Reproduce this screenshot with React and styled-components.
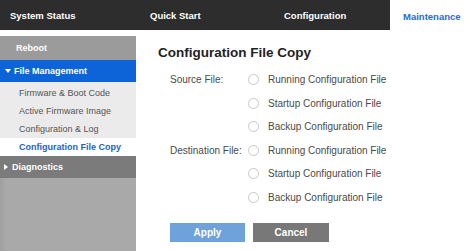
import React from 'react';
import styled, { createGlobalStyle } from 'styled-components';

const Global = createGlobalStyle`
  html, body { margin: 0; padding: 0; background: #fff; }
  body {
    font-family: "Liberation Sans", Arial, sans-serif;
    width: 474px; height: 251px; overflow: hidden;
  }
`;

const Page = styled.div`
  display: flex;
  flex-direction: column;
  width: 474px;
  height: 251px;
`;

const TopBar = styled.div`
  display: flex;
  height: 30px;
  flex-shrink: 0;
  background: #2d2d2d;
`;

const Tab = styled.div`
  box-sizing: border-box;
  width: ${p => (p.$w ? `${p.$w}px` : 'auto')};
  flex: ${p => (p.$w ? '0 0 auto' : '1')};
  padding-left: ${p => p.$pl}px;
  padding-top: ${p => (p.$active ? 2 : 0)}px;
  display: flex;
  align-items: center;
  background: ${p => (p.$active ? '#fff' : 'transparent')};
  color: ${p => (p.$active ? '#2a6ad2' : '#fff')};
  font-size: 9.5px;
  font-weight: bold;
  white-space: nowrap;
`;

const Body = styled.div`
  display: flex;
  flex: 1;
  min-height: 0;
`;

const Sidebar = styled.div`
  width: 136px;
  margin-top: 6px;
  display: flex;
  flex-direction: column;
  flex-shrink: 0;
`;

const SideHead = styled.div`
  box-sizing: border-box;
  height: ${p => p.$h}px;
  padding-left: ${p => p.$pl}px;
  display: flex;
  align-items: center;
  background: ${p => p.$bg};
  color: #fff;
  font-size: 9px;
  font-weight: bold;
  white-space: nowrap;
`;

const Caret = styled.span`
  width: 0;
  height: 0;
  margin-right: ${p => (p.$open ? 3 : 4)}px;
  ${p =>
    p.$open
      ? `border-left: 3px solid transparent; border-right: 3px solid transparent; border-top: 4px solid #fff;`
      : `border-top: 3px solid transparent; border-bottom: 3px solid transparent; border-left: 4px solid #fff;`}
`;

const SubList = styled.div`
  background: #ebebeb;
  padding-top: 2px;
  display: flex;
  flex-direction: column;
`;

const SubItem = styled.div`
  height: 18px;
  padding-left: 19px;
  display: flex;
  align-items: center;
  font-size: 9px;
  white-space: nowrap;
  background: ${p => (p.$active ? '#fff' : 'transparent')};
  color: ${p => (p.$active ? '#1f5fc6' : '#555')};
  font-weight: ${p => (p.$active ? 'bold' : 'normal')};
`;

const Filler = styled.div`
  flex: 1;
  background: linear-gradient(to right, #9f9f9f 0px, #a9a9a9 6px, #a9a9a9 100%);
`;

const Content = styled.div`
  flex: 1;
  padding: 14px 0 0 22px;
  color: #4a4a4a;
`;

const Title = styled.h1`
  margin: 0;
  font-size: 13.5px;
  line-height: 17px;
  font-weight: bold;
  color: #222;
  white-space: nowrap;
`;

const Form = styled.div`
  margin-top: 7px;
  padding-left: 12px;
  display: grid;
  grid-template-columns: 78px auto;
  grid-auto-rows: 23.5px;
  font-size: 10px;
`;

const Label = styled.div`
  display: flex;
  align-items: center;
  white-space: nowrap;
`;

const Option = styled.label`
  grid-column: 2;
  display: flex;
  align-items: center;
  white-space: nowrap;
`;

const Radio = styled.span`
  box-sizing: border-box;
  width: 11px;
  height: 11px;
  border-radius: 50%;
  border: 1px solid #c8c8c8;
  background: #fff;
  margin-right: 9px;
  flex-shrink: 0;
`;

const Buttons = styled.div`
  margin-top: 14px;
  padding-left: 12px;
  display: flex;
  gap: 8px;
`;

const Button = styled.button`
  width: ${p => p.$w}px;
  height: 19px;
  border: none;
  padding: 0;
  background: ${p => p.$bg};
  color: #fff;
  font-family: "Liberation Sans", Arial, sans-serif;
  font-size: 10px;
  font-weight: bold;
`;

const options = ['Running Configuration File', 'Startup Configuration File', 'Backup Configuration File'];

function Group({ label }) {
  return (
    <>
      {options.map((o, i) => (
        <React.Fragment key={o}>
          {i === 0 && <Label>{label}</Label>}
          <Option>
            <Radio />
            {o}
          </Option>
        </React.Fragment>
      ))}
    </>
  );
}

export default function App() {
  return (
    <Page>
      <Global />
      <TopBar>
        <Tab $w={140} $pl={10}>System Status</Tab>
        <Tab $w={134} $pl={10}>Quick Start</Tab>
        <Tab $w={116} $pl={10}>Configuration</Tab>
        <Tab $pl={13} $active>Maintenance</Tab>
      </TopBar>
      <Body>
        <Sidebar>
          <SideHead $h={24} $pl={16} $bg="#9b9b9b">Reboot</SideHead>
          <SideHead $h={22} $pl={5} $bg="#0d64d8">
            <Caret $open />
            File Management
          </SideHead>
          <SubList>
            <SubItem>Firmware &amp; Boot Code</SubItem>
            <SubItem>Active Firmware Image</SubItem>
            <SubItem>Configuration &amp; Log</SubItem>
            <SubItem $active>Configuration File Copy</SubItem>
          </SubList>
          <SideHead $h={22} $pl={4} $bg="#7b7b7b">
            <Caret />
            Diagnostics
          </SideHead>
          <Filler />
        </Sidebar>
        <Content>
          <Title>Configuration File Copy</Title>
          <Form>
            <Group label="Source File:" />
            <Group label="Destination File:" />
          </Form>
          <Buttons>
            <Button $w={75} $bg="#6fa2da">Apply</Button>
            <Button $w={76} $bg="#787878">Cancel</Button>
          </Buttons>
        </Content>
      </Body>
    </Page>
  );
}
